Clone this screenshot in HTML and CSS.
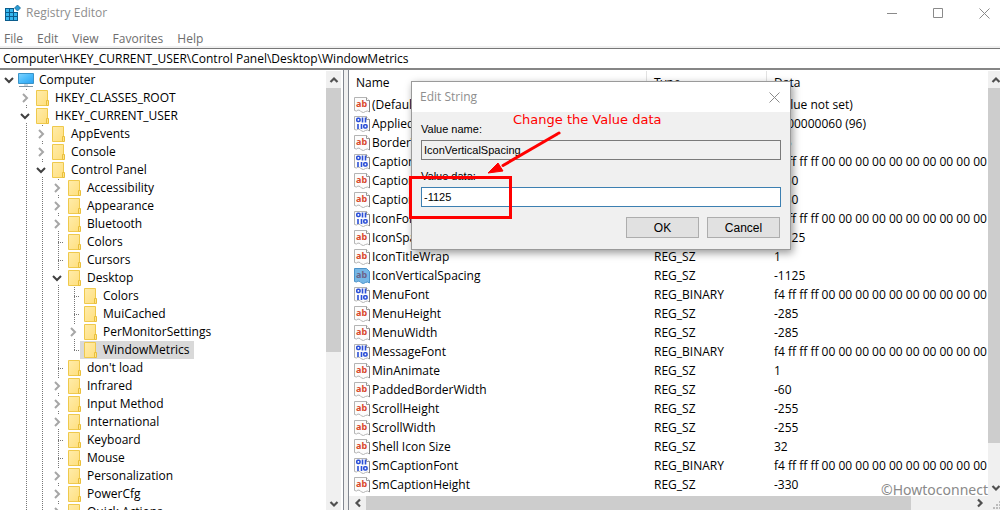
FILE: index.html
```html
<!DOCTYPE html>
<html lang="en-US">
<head>
    <meta charset="utf-8">
    <meta name="viewport" content="width=device-width, initial-scale=1.0">
    <title>Registry Editor</title>
    <link rel="stylesheet" href="styles.css">
</head>
<body>
    <!-- Shared icons -->
    <svg class="defs" width="0" height="0" aria-hidden="true">
        <linearGradient id="yellow" x1="0" y1="0" x2="1" y2="1">
            <stop offset="0" stop-color="#ffecab"/>
            <stop offset="1" stop-color="#ffdf7d"/>
        </linearGradient>
        <linearGradient id="screen" x1="0" y1="0" x2="1" y2="1">
            <stop offset="0" stop-color="#7fd3ff"/>
            <stop offset="0.5" stop-color="#4bbcfb"/>
            <stop offset="1" stop-color="#2ba0f0"/>
        </linearGradient>
        <symbol id="folder" viewBox="0 0 14 16">
            <path d="M.5.5h11v15H.5z" fill="url(#yellow)" stroke="#efc94c"/>
            <path d="M10.5 10.5h2v5h-2z" fill="#ffe38a" stroke="#e9bf3b"/>
        </symbol>
        <symbol id="open" viewBox="0 0 10 8">
            <path d="M1 2L5 6 9 2" fill="none" stroke="#404040" stroke-width="2"/>
        </symbol>
        <symbol id="closed" viewBox="0 0 8 10">
            <path d="M2 1L6 5 2 9" fill="none" stroke="#a6a6a6" stroke-width="2"/>
        </symbol>
        <symbol id="arrow" viewBox="0 0 10 8">
            <path d="M1.500 6L5 2.500 8.500 6" fill="none" stroke="#505050" stroke-width="2.200"/>
        </symbol>
        <symbol id="close" viewBox="0 0 11 11">
            <path d="M.5.5l10 10M10.500.5l-10 10" fill="none" stroke="#8a8a8a"/>
        </symbol>
        <symbol id="paper" viewBox="0 0 16 16">
            <path d="M.5.5h12l3 3v11.500l-2-1-2 .5-2 1-2-.5-1.500-1.500-2-.5-1.500 1-2-.5z" fill="#fcfcfc" stroke="#b4b4b4"/>
            <path d="M12.500.5v3h3" fill="#fff" stroke="#999"/>
            <path d="M15.500 3.500v11.500" stroke="#858585"/>
        </symbol>
        <symbol id="sz" viewBox="0 0 16 16">
            <use href="#paper"/>
            <text class="icon-ab" x="2" y="10">ab</text>
        </symbol>
        <symbol id="sz-on" viewBox="0 0 16 16">
            <path d="M.5.5h12l3 3v11.500l-2-1-2 .5-2 1-2-.5-1.500-1.500-2-.5-1.500 1-2-.5z" fill="#76b7e6" stroke="#4b93c9"/>
            <text class="icon-ab icon-ab-on" x="2" y="10">ab</text>
        </symbol>
        <symbol id="bin" viewBox="0 0 16 16">
            <use href="#paper"/>
            <g fill="none" stroke="#2b4fd8" stroke-width="1.600">
                <rect x="2.800" y="2.300" width="3.200" height="3.200" rx="1"/>
                <path d="M8.500 1.500v5M11.500 1.500v5M4 8v5M7.500 8v5"/>
                <rect x="9.800" y="8.800" width="3.200" height="3.200" rx="1"/>
            </g>
        </symbol>
    </svg>

    <div class="window">
        <header class="titlebar">
            <svg class="app-icon" width="16" height="16" viewBox="0 0 16 16">
                <path d="M0 3h9v4h4v9H0z" fill="#0b5c8c"/>
                <path d="M1 4h3v3H1zM5 4h3v3H5zM1 8h3v3H1zM5 8h3v3H5zM9 8h3v3H9zM1 12h3v3H1zM5 12h3v3H5zM9 12h3v3H9z" fill="#36b7ee"/>
                <path d="M12.500 0L15.500 3l-3 3-3-3z" fill="#2a9bd3" stroke="#16699a" stroke-width=".8"/>
            </svg>
            <h1>Registry Editor</h1>
            <div class="window-buttons">
                <button type="button" aria-label="Minimize"><svg width="11" height="11"><path d="M0 5.500h10" stroke="#8a8a8a"/></svg></button>
                <button type="button" aria-label="Maximize"><svg width="11" height="11"><path d="M.5.500h9v9h-9z" fill="none" stroke="#8a8a8a"/></svg></button>
                <button type="button" aria-label="Close"><svg width="11" height="11"><use href="#close"/></svg></button>
            </div>
        </header>

        <nav class="menu">
            <button type="button">File</button>
            <button type="button">Edit</button>
            <button type="button">View</button>
            <button type="button">Favorites</button>
            <button type="button">Help</button>
        </nav>

        <input class="address" type="text" aria-label="Address" value="Computer\HKEY_CURRENT_USER\Control Panel\Desktop\WindowMetrics">

        <main class="panes">
            <section class="tree-pane">
                <ul class="tree">
                    <li class="root">
                        <div class="row"><span class="toggle"><svg width="10" height="8"><use href="#open"/></svg></span><span class="item">
                            <svg width="16" height="16" viewBox="0 0 16 16">
                                <path d="M.5 1.500h15v10H.5z" fill="url(#screen)" stroke="#3a94c9"/>
                                <path d="M6 12h4v2H6z" fill="#cfd8de"/>
                                <path d="M1 14.500h14" stroke="#8094a3"/>
                            </svg>Computer</span></div>
                        <ul>
                            <li><div class="row"><span class="toggle"><svg width="8" height="10"><use href="#closed"/></svg></span><span class="item"><svg width="14" height="16"><use href="#folder"/></svg>HKEY_CLASSES_ROOT</span></div></li>
                            <li>
                                <div class="row"><span class="toggle"><svg width="10" height="8"><use href="#open"/></svg></span><span class="item"><svg width="14" height="16"><use href="#folder"/></svg>HKEY_CURRENT_USER</span></div>
                                <ul>
                                    <li><div class="row"><span class="toggle"><svg width="8" height="10"><use href="#closed"/></svg></span><span class="item"><svg width="14" height="16"><use href="#folder"/></svg>AppEvents</span></div></li>
                                    <li><div class="row"><span class="toggle"><svg width="8" height="10"><use href="#closed"/></svg></span><span class="item"><svg width="14" height="16"><use href="#folder"/></svg>Console</span></div></li>
                                    <li>
                                        <div class="row"><span class="toggle"><svg width="10" height="8"><use href="#open"/></svg></span><span class="item"><svg width="14" height="16"><use href="#folder"/></svg>Control Panel</span></div>
                                        <ul>
                                            <li><div class="row"><span class="toggle"><svg width="8" height="10"><use href="#closed"/></svg></span><span class="item"><svg width="14" height="16"><use href="#folder"/></svg>Accessibility</span></div></li>
                                            <li><div class="row"><span class="toggle"><svg width="8" height="10"><use href="#closed"/></svg></span><span class="item"><svg width="14" height="16"><use href="#folder"/></svg>Appearance</span></div></li>
                                            <li><div class="row"><span class="toggle"><svg width="8" height="10"><use href="#closed"/></svg></span><span class="item"><svg width="14" height="16"><use href="#folder"/></svg>Bluetooth</span></div></li>
                                            <li><div class="row"><span class="leaf"></span><span class="item"><svg width="14" height="16"><use href="#folder"/></svg>Colors</span></div></li>
                                            <li><div class="row"><span class="leaf"></span><span class="item"><svg width="14" height="16"><use href="#folder"/></svg>Cursors</span></div></li>
                                            <li>
                                                <div class="row"><span class="toggle"><svg width="10" height="8"><use href="#open"/></svg></span><span class="item"><svg width="14" height="16"><use href="#folder"/></svg>Desktop</span></div>
                                                <ul>
                                                    <li><div class="row"><span class="leaf"></span><span class="item"><svg width="14" height="16"><use href="#folder"/></svg>Colors</span></div></li>
                                                    <li><div class="row"><span class="leaf"></span><span class="item"><svg width="14" height="16"><use href="#folder"/></svg>MuiCached</span></div></li>
                                                    <li><div class="row"><span class="toggle"><svg width="8" height="10"><use href="#closed"/></svg></span><span class="item"><svg width="14" height="16"><use href="#folder"/></svg>PerMonitorSettings</span></div></li>
                                                    <li class="last"><div class="row"><span class="leaf"></span><span class="item selected"><svg width="14" height="16"><use href="#folder"/></svg>WindowMetrics</span></div></li>
                                                </ul>
                                            </li>
                                            <li><div class="row"><span class="leaf"></span><span class="item"><svg width="14" height="16"><use href="#folder"/></svg>don't load</span></div></li>
                                            <li><div class="row"><span class="toggle"><svg width="8" height="10"><use href="#closed"/></svg></span><span class="item"><svg width="14" height="16"><use href="#folder"/></svg>Infrared</span></div></li>
                                            <li><div class="row"><span class="toggle"><svg width="8" height="10"><use href="#closed"/></svg></span><span class="item"><svg width="14" height="16"><use href="#folder"/></svg>Input Method</span></div></li>
                                            <li><div class="row"><span class="toggle"><svg width="8" height="10"><use href="#closed"/></svg></span><span class="item"><svg width="14" height="16"><use href="#folder"/></svg>International</span></div></li>
                                            <li><div class="row"><span class="leaf"></span><span class="item"><svg width="14" height="16"><use href="#folder"/></svg>Keyboard</span></div></li>
                                            <li><div class="row"><span class="leaf"></span><span class="item"><svg width="14" height="16"><use href="#folder"/></svg>Mouse</span></div></li>
                                            <li><div class="row"><span class="toggle"><svg width="8" height="10"><use href="#closed"/></svg></span><span class="item"><svg width="14" height="16"><use href="#folder"/></svg>Personalization</span></div></li>
                                            <li><div class="row"><span class="toggle"><svg width="8" height="10"><use href="#closed"/></svg></span><span class="item"><svg width="14" height="16"><use href="#folder"/></svg>PowerCfg</span></div></li>
                                            <li><div class="row"><span class="toggle"><svg width="8" height="10"><use href="#closed"/></svg></span><span class="item"><svg width="14" height="16"><use href="#folder"/></svg>Quick Actions</span></div></li>
                                        </ul>
                                    </li>
                                </ul>
                            </li>
                        </ul>
                    </li>
                </ul>
                <div class="scrollbar">
                    <button type="button" aria-label="Scroll up"><svg width="10" height="8"><use href="#arrow"/></svg></button>
                    <div class="thumb tree-thumb"></div>
                    <div class="track tree-track"></div>
                    <button type="button" class="cut" aria-label="Scroll down"><svg class="down" width="10" height="8"><use href="#arrow"/></svg></button>
                </div>
            </section>

            <div class="splitter"></div>

            <section class="value-pane">
                <div class="value-area">
                    <div class="values">
                        <table>
                            <thead>
                                <tr><th class="col-name">Name</th><th class="col-type">Type</th><th>Data</th></tr>
                            </thead>
                            <tbody>
                                <tr><td><svg width="16" height="16"><use href="#sz"/></svg>(Default)</td><td>REG_SZ</td><td>(value not set)</td></tr>
                                <tr><td><svg width="16" height="16"><use href="#bin"/></svg>AppliedDPI</td><td>REG_DWORD</td><td>0x00000060 (96)</td></tr>
                                <tr><td><svg width="16" height="16"><use href="#sz"/></svg>BorderWidth</td><td>REG_SZ</td><td>-15</td></tr>
                                <tr><td><svg width="16" height="16"><use href="#bin"/></svg>CaptionFont</td><td>REG_BINARY</td><td>f4 ff ff ff 00 00 00 00 00 00 00 00 00 00 00 00 90 01</td></tr>
                                <tr><td><svg width="16" height="16"><use href="#sz"/></svg>CaptionHeight</td><td>REG_SZ</td><td>-330</td></tr>
                                <tr><td><svg width="16" height="16"><use href="#sz"/></svg>CaptionWidth</td><td>REG_SZ</td><td>-330</td></tr>
                                <tr><td><svg width="16" height="16"><use href="#bin"/></svg>IconFont</td><td>REG_BINARY</td><td>f4 ff ff ff 00 00 00 00 00 00 00 00 00 00 00 00 90 01</td></tr>
                                <tr><td><svg width="16" height="16"><use href="#sz"/></svg>IconSpacing</td><td>REG_SZ</td><td>-1125</td></tr>
                                <tr><td><svg width="16" height="16"><use href="#sz"/></svg>IconTitleWrap</td><td>REG_SZ</td><td>1</td></tr>
                                <tr><td><svg width="16" height="16"><use href="#sz-on"/></svg>IconVerticalSpacing</td><td>REG_SZ</td><td>-1125</td></tr>
                                <tr><td><svg width="16" height="16"><use href="#bin"/></svg>MenuFont</td><td>REG_BINARY</td><td>f4 ff ff ff 00 00 00 00 00 00 00 00 00 00 00 00 90 01</td></tr>
                                <tr><td><svg width="16" height="16"><use href="#sz"/></svg>MenuHeight</td><td>REG_SZ</td><td>-285</td></tr>
                                <tr><td><svg width="16" height="16"><use href="#sz"/></svg>MenuWidth</td><td>REG_SZ</td><td>-285</td></tr>
                                <tr><td><svg width="16" height="16"><use href="#bin"/></svg>MessageFont</td><td>REG_BINARY</td><td>f4 ff ff ff 00 00 00 00 00 00 00 00 00 00 00 00 90 01</td></tr>
                                <tr><td><svg width="16" height="16"><use href="#sz"/></svg>MinAnimate</td><td>REG_SZ</td><td>1</td></tr>
                                <tr><td><svg width="16" height="16"><use href="#sz"/></svg>PaddedBorderWidth</td><td>REG_SZ</td><td>-60</td></tr>
                                <tr><td><svg width="16" height="16"><use href="#sz"/></svg>ScrollHeight</td><td>REG_SZ</td><td>-255</td></tr>
                                <tr><td><svg width="16" height="16"><use href="#sz"/></svg>ScrollWidth</td><td>REG_SZ</td><td>-255</td></tr>
                                <tr><td><svg width="16" height="16"><use href="#sz"/></svg>Shell Icon Size</td><td>REG_SZ</td><td>32</td></tr>
                                <tr><td><svg width="16" height="16"><use href="#bin"/></svg>SmCaptionFont</td><td>REG_BINARY</td><td>f4 ff ff ff 00 00 00 00 00 00 00 00 00 00 00 00 90 01</td></tr>
                                <tr><td><svg width="16" height="16"><use href="#sz"/></svg>SmCaptionHeight</td><td>REG_SZ</td><td>-330</td></tr>
                            </tbody>
                        </table>
                    </div>
                    <div class="scrollbar narrow">
                        <button type="button" aria-label="Scroll up"><svg width="10" height="8"><use href="#arrow"/></svg></button>
                        <div class="thumb value-thumb"></div>
                        <div class="track value-track"></div>
                        <button type="button" aria-label="Scroll down"><svg class="down" width="10" height="8"><use href="#arrow"/></svg></button>
                    </div>
                </div>
                <div class="hscroll">
                    <button type="button" aria-label="Scroll left"><svg class="left" width="10" height="8"><use href="#arrow"/></svg></button>
                    <div class="thumb h-thumb"></div>
                    <div class="track h-track"></div>
                    <button type="button" aria-label="Scroll right"><svg class="right" width="10" height="8"><use href="#arrow"/></svg></button>
                    <svg class="grip" width="12" height="14"><path d="M11 5h2v2h-2zM8 8h2v2H8zM11 8h2v2h-2zM5 11h2v2H5zM8 11h2v2H8zM11 11h2v2h-2z" fill="#bcbcbc"/></svg>
                </div>
                <p class="watermark">©Howtoconnect</p>
            </section>
        </main>

        <form class="dialog" role="dialog" aria-labelledby="dialog-title">
            <div class="dialog-title">
                <h2 id="dialog-title">Edit String</h2>
                <button type="button" aria-label="Close"><svg width="11" height="11"><use href="#close"/></svg></button>
            </div>
            <div class="dialog-body">
                <label for="valueName">Value name:</label>
                <input type="text" id="valueName" value="IconVerticalSpacing" readonly>
                <label for="valueData">Value data:</label>
                <input type="text" id="valueData" value="-1125">
                <div class="dialog-buttons">
                    <button type="button">OK</button>
                    <button type="button">Cancel</button>
                </div>
            </div>
        </form>

        <!-- Callout on the dialog -->
        <p class="callout">Change the Value data</p>
        <svg class="callout-arrow" width="76" height="46">
            <path d="M73 3L17 35.500" stroke="#f00" stroke-width="3" stroke-linecap="round"/>
            <path d="M2 43l10-10 5 8z" fill="#f00" stroke="#f00"/>
        </svg>
        <div class="callout-box"></div>
    </div>
</body>
</html>
```
FILE: styles.css
```css
* {
    box-sizing: border-box;
}

body {
    margin: 0;
    background-color: #fff;
    color: #000;
    font-family: "Open Sans", "Noto Sans", sans-serif;
    font-size: 12px;
    line-height: 18px;
}

h1, h2, p, ul {
    margin: 0;
    padding: 0;
    font-size: 12px;
    font-weight: normal;
}

button, input {
    font: inherit;
    color: inherit;
    border: none;
    border-radius: 0;
    padding: 0;
    margin: 0;
    background: none;
}

svg {
    flex: none;
    display: block;
}

.defs {
    position: absolute;
}

.window {
    position: relative;
    display: flex;
    flex-direction: column;
    height: 100vh;
    overflow: hidden;
}

/* Title bar and menu */
.titlebar {
    display: flex;
    align-items: center;
    height: 26px;
    padding-left: 5px;
    gap: 5px;
    color: #8e8e8e;
}

.window-buttons {
    display: flex;
    margin-left: auto;
}

.window-buttons button {
    width: 46px;
    height: 24px;
    padding-left: 25px;
}

.menu {
    display: flex;
    gap: 14px;
    height: 22px;
    padding: 3px 4px 0;
    line-height: 18px;
    color: #6d6d6d;
}

.address {
    width: 100%;
    height: 22px;
    padding: 0 3px;
    border-top: 1px solid #777;
    border-bottom: 2px solid #868686;
    box-shadow: 0 -2px #f0f0f0;
}

/* Panes */
.panes {
    flex: 1;
    display: flex;
    min-height: 0;
}

.tree-pane {
    display: flex;
    width: 341px;
    flex: none;
    padding-top: 1px;
}

.tree {
    flex: 1;
    min-width: 0;
    overflow: hidden;
    padding-left: 2px;
}

.tree ul {
    padding-left: 16px;
}

.tree li {
    list-style: none;
    background: linear-gradient(#777 50%, transparent 50%) 8px 0 / 1px 2px repeat-y;
}

.tree .root,
.tree .last {
    background: none;
}

.row {
    display: flex;
    align-items: center;
    height: 18px;
}

.toggle {
    display: flex;
    align-items: center;
    justify-content: center;
    width: 14px;
    height: 14px;
    background-color: #fff;
}

.leaf {
    width: 6px;
    height: 1px;
    margin-left: 8px;
    background: linear-gradient(to right, #777 50%, transparent 50%) 0 0 / 2px 1px repeat-x;
}

.last .leaf {
    align-self: flex-start;
    height: 10px;
    background:
        linear-gradient(#777 50%, transparent 50%) 0 0 / 1px 2px repeat-y,
        linear-gradient(to right, #777 50%, transparent 50%) 0 100% / 2px 1px repeat-x;
}

.item {
    display: flex;
    align-items: center;
    gap: 5px;
    height: 18px;
    padding: 0 4px;
    white-space: nowrap;
}

.root > .row .item {
    padding: 0 2px;
}

.row .selected {
    background-color: #d9d9d9;
}

.splitter {
    flex: none;
    width: 8px;
    border-left: 2px solid #fff;
    border-right: 1px solid #828790;
    background: linear-gradient(to right, #828790 1px, #f0f0f0 1px);
}

.value-pane {
    position: relative;
    flex: 1;
    min-width: 0;
    display: flex;
    flex-direction: column;
    padding-top: 1px;
}

.value-area {
    flex: 1;
    display: flex;
    min-height: 0;
}

.values {
    flex: 1;
    min-width: 0;
    overflow: hidden;
}

table {
    width: 100%;
    table-layout: fixed;
    border-collapse: collapse;
}

th {
    height: 24px;
    padding: 0 7px;
    font-weight: normal;
    text-align: left;
    background: linear-gradient(#e2e2e2, #e2e2e2) right 0 top 0 / 1px 22px no-repeat;
}

th:last-child {
    background: none;
}

.col-name {
    width: 298px;
}

.col-type {
    width: 120px;
}

td {
    height: 19px;
    padding: 0 0 0 7px;
    overflow: hidden;
    white-space: nowrap;
}

td:first-child {
    padding-left: 5px;
}

td svg {
    display: inline-block;
    vertical-align: middle;
    margin-right: 2px;
}

.icon-ab {
    font: bold 9px "Noto Sans", sans-serif;
    fill: #d9472b;
}

.icon-ab-on {
    fill: #6d6288;
}

/* Scroll bars */
.scrollbar {
    display: flex;
    flex-direction: column;
    flex: none;
    width: 15px;
    overflow: hidden;
    background-color: #f0f0f0;
}

.narrow {
    width: 12px;
}

.scrollbar button, .hscroll button {
    display: flex;
    align-items: center;
    justify-content: center;
    flex: none;
    width: 15px;
    height: 17px;
}

.scrollbar .cut {
    height: 13px;
}

.thumb {
    background-color: #cdcdcd;
}

.tree-thumb {
    flex: 264;
}

.tree-track {
    flex: 145;
}

.value-thumb {
    flex: 355;
}

.value-track {
    flex: 36;
}

.hscroll {
    display: flex;
    height: 14px;
    background-color: #f0f0f0;
}

.hscroll button {
    width: 17px;
    height: 14px;
}

.h-thumb {
    flex: 544;
}

.h-track {
    flex: 60;
}

.down {
    transform: rotate(180deg);
}

.left {
    transform: rotate(-90deg);
}

.right {
    transform: rotate(90deg);
}

.watermark {
    position: absolute;
    right: 12px;
    bottom: 11px;
    font-family: "Noto Sans", sans-serif;
    font-size: 14px;
    color: #8a8a8a;
}

/* Edit String dialog */
.dialog {
    position: absolute;
    left: 411px;
    top: 81px;
    width: 380px;
    border: 1px solid #9a9a9a;
    background-color: #f0f0f0;
    box-shadow: 2px 3px 8px rgba(0, 0, 0, 0.4);
}

.dialog-title {
    display: flex;
    align-items: center;
    justify-content: space-between;
    height: 30px;
    padding: 0 10px 0 8px;
    background-color: #fff;
    color: #8e8e8e;
}

.dialog-body {
    display: flex;
    flex-direction: column;
    padding: 9px 9px 11px;
    font-family: "Liberation Sans", Arial, sans-serif;
    font-size: 11px;
}

.dialog-body label {
    height: 19px;
    line-height: 16px;
}

.dialog-body input {
    height: 20px;
    padding: 0 2px;
    border: 1px solid #7a7a7a;
}

#valueName {
    margin-bottom: 8px;
}

#valueData {
    border-color: #3c7fb1;
    background-color: #fff;
}

.dialog-buttons {
    display: flex;
    justify-content: flex-end;
    gap: 8px;
    margin-top: 10px;
    padding-right: 1px;
}

.dialog-buttons button {
    width: 73px;
    height: 21px;
    border: 1px solid #adadad;
    background-color: #e1e1e1;
    font-size: 12px;
}

/* Red callout */
.callout {
    position: absolute;
    left: 513px;
    top: 111px;
    font-family: "DejaVu Sans", Verdana, sans-serif;
    font-size: 13px;
    color: #f00;
}

.callout-arrow {
    position: absolute;
    left: 486px;
    top: 130px;
}

.callout-box {
    position: absolute;
    left: 409px;
    top: 176px;
    width: 103px;
    height: 43px;
    border: 3px solid #f00;
}
```
